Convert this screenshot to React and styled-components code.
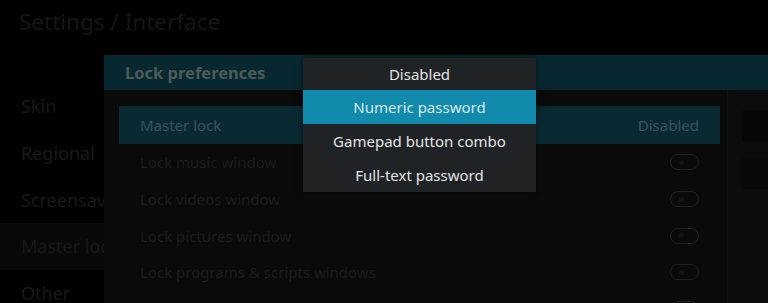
import React from 'react';
import styled, { createGlobalStyle } from 'styled-components';

const GlobalStyle = createGlobalStyle`
  html, body {
    margin: 0;
    padding: 0;
    background: #000;
  }
  body {
    font-family: "Noto Sans", "Open Sans", sans-serif;
  }
`;

const Screen = styled.div`
  position: relative;
  width: 768px;
  height: 303px;
  overflow: hidden;
  background: #010101;
`;

const PageTitle = styled.div`
  height: 83px;
  padding-left: 19px;
  padding-top: 6px;
  box-sizing: border-box;
  font-size: 22.5px;
  line-height: 32px;
  color: #151515;
`;

const Sidebar = styled.div`
  display: flex;
  flex-direction: column;
  width: 320px;
`;

const SideItem = styled.div`
  height: 46.7px;
  display: flex;
  align-items: center;
  padding-left: 21px;
  font-size: 18px;
  color: #191919;
  background: ${(p) => (p.$active ? '#07090a' : 'transparent')};
`;

const Dialog = styled.div`
  position: absolute;
  left: 104px;
  top: 55px;
  right: -10px;
  bottom: 0;
  display: flex;
  flex-direction: column;
  background: #0a0a0b;
`;

const DialogHeader = styled.div`
  height: 35px;
  flex-shrink: 0;
  display: flex;
  align-items: center;
  padding-left: 21px;
  background: #082830;
  font-size: 16.5px;
  font-weight: 700;
  color: #4c5a5d;
`;

const DialogBody = styled.div`
  display: flex;
  flex: 1;
  padding: 16px 0 0 15px;
`;

const List = styled.div`
  width: 601px;
  display: flex;
  flex-direction: column;
`;

const Row = styled.div`
  height: ${(p) => (p.$focused ? '38px' : '36.7px')};
  flex-shrink: 0;
  display: flex;
  align-items: center;
  justify-content: space-between;
  padding: 0 21px;
  font-size: 15px;
  color: ${(p) => (p.$focused ? '#35555b' : '#1c1d1e')};
  background: ${(p) => (p.$focused ? '#0a2a31' : 'transparent')};
`;

const Toggle = styled.div`
  box-sizing: border-box;
  width: 29px;
  height: 16px;
  border: 1.5px solid #1f2123;
  border-radius: 8px;
  display: flex;
  align-items: center;
  padding-left: 8px;
  &::before {
    content: '';
    width: 5px;
    height: 5px;
    border-radius: 50%;
    background: #131415;
  }
`;

const SidePanel = styled.div`
  flex: 1;
  margin-left: 7px;
  margin-top: -16px;
  border-left: 1px solid #111214;
  background: #0b0c0d;
  display: flex;
  flex-direction: column;
  gap: 16px;
  padding: 21px 0 0 14px;
`;

const PanelBox = styled.div`
  height: 31px;
  background: ${(p) => (p.$dim ? '#08090a' : '#060707')};
`;

const Dropdown = styled.div`
  position: absolute;
  left: 303px;
  top: 58px;
  width: 233px;
  background: #1f2326;
  display: flex;
  flex-direction: column;
  box-shadow: 0 0 6px rgba(0, 0, 0, 0.6);
`;

const Option = styled.div`
  height: 34px;
  display: flex;
  align-items: center;
  justify-content: center;
  font-size: 15px;
  color: ${(p) => (p.$selected ? '#d8e8ee' : '#e4e4e4')};
  background: ${(p) => (p.$selected ? '#128aab' : 'transparent')};
  &:first-child {
    height: 32px;
  }
`;

const sideItems = ['Skin', 'Regional', 'Screensaver', 'Master lock', 'Other'];
const rows = [
  'Lock music window',
  'Lock videos window',
  'Lock pictures window',
  'Lock programs & scripts windows',
  'Lock file manager',
];
const options = ['Disabled', 'Numeric password', 'Gamepad button combo', 'Full-text password'];

export default function App() {
  return (
    <Screen>
      <GlobalStyle />
      <PageTitle>Settings / Interface</PageTitle>
      <Sidebar>
        {sideItems.map((s) => (
          <SideItem key={s} $active={s === 'Master lock'}>
            {s}
          </SideItem>
        ))}
      </Sidebar>

      <Dialog>
        <DialogHeader>Lock preferences</DialogHeader>
        <DialogBody>
          <List>
            <Row $focused>
              <span>Master lock</span>
              <span>Disabled</span>
            </Row>
            {rows.map((r) => (
              <Row key={r}>
                <span>{r}</span>
                <Toggle />
              </Row>
            ))}
          </List>
          <SidePanel>
            <PanelBox />
            <PanelBox $dim />
          </SidePanel>
        </DialogBody>
      </Dialog>

      <Dropdown>
        {options.map((o) => (
          <Option key={o} $selected={o === 'Numeric password'}>
            {o}
          </Option>
        ))}
      </Dropdown>
    </Screen>
  );
}
